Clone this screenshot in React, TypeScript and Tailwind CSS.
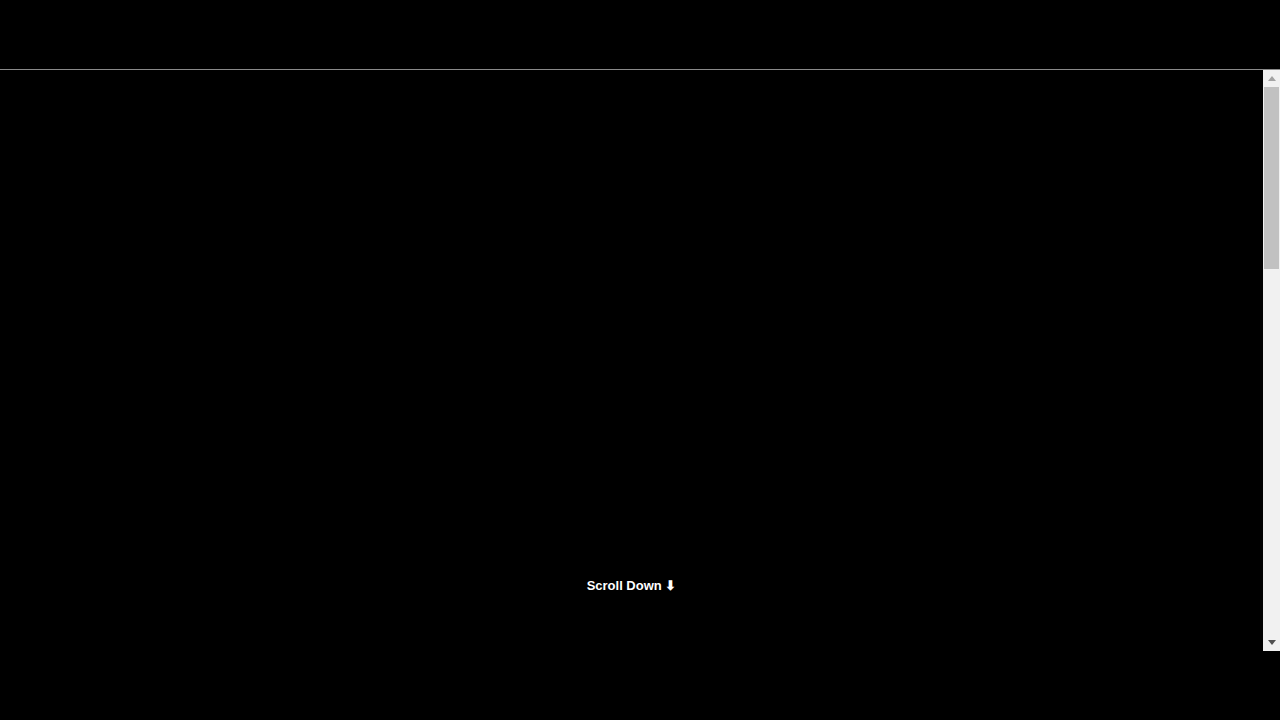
import React from "react";

export default function App() {
  return (
    <div className="w-[1280px] h-[720px] bg-black overflow-hidden" style={{ fontFamily: '"Liberation Sans", Arial, sans-serif' }}>
      <div className="h-[69px]" />
      <div className="h-px bg-[#8a8a8a]" />
      <div className="h-[581px] flex">
        <div className="flex-1 h-full overflow-hidden">
          <div className="pt-[508px] text-center text-white text-[13px] font-bold leading-[15px]">Scroll Down ⬇</div>
        </div>
        <div className="w-[17px] h-full bg-[#f1f1f1] flex flex-col">
          <div className="h-[17px] flex items-center justify-center">
            <svg width="8" height="5" viewBox="0 0 8 5"><polygon points="0,5 8,5 4,0" fill="#a3a3a3" /></svg>
          </div>
          <div className="h-[182px] mx-px bg-[#c1c1c1]" />
          <div className="flex-1" />
          <div className="h-[17px] flex items-center justify-center">
            <svg width="8" height="5" viewBox="0 0 8 5"><polygon points="0,0 8,0 4,5" fill="#505050" /></svg>
          </div>
        </div>
      </div>
    </div>
  );
}
